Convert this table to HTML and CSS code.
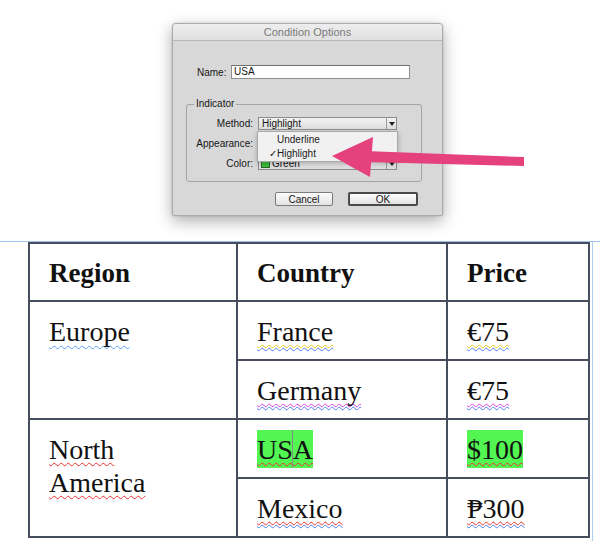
FILE: index.html
```html
<!DOCTYPE html>
<html>
<head>
<meta charset="utf-8">
<link rel="stylesheet" href="styles.css">
</head>
<body>
<div class="top">
  <div class="dialog">
    <div class="titlebar">Condition Options</div>
    <div class="name-row"><label class="name-lbl">Name:</label><div class="input">USA</div></div>
    <fieldset class="group">
      <legend>Indicator</legend>
      <div class="row">
        <span class="lbl">Method:</span>
        <div class="select">
          <span class="val">Highlight</span><span class="arr"></span>
          <div class="popup">
            <div class="item">Underline</div>
            <div class="item"><span class="check">✓</span>Highlight</div>
          </div>
        </div>
      </div>
      <div class="row">
        <span class="lbl">Appearance:</span>
        <div class="select"><span class="val"></span><span class="arr"></span></div>
      </div>
      <div class="row">
        <span class="lbl">Color:</span>
        <div class="select"><span class="swatch"></span><span class="val">Green</span><span class="arr"></span></div>
      </div>
    </fieldset>
    <div class="buttons"><button class="btn cancel">Cancel</button><button class="btn ok">OK</button></div>
  </div>
  <svg class="arrow" width="600" height="241" viewBox="0 0 600 241">
    <polygon points="365,151 524,157 524,166 365,162" fill="#e5417c"/>
    <polygon points="332,156 373,137 370,177" fill="#e5417c"/>
  </svg>
</div>
<div class="page">
  <div class="frame">
    <table class="grid">
      <colgroup><col class="c1"><col class="c2"><col class="c3"></colgroup>
      <tr class="head"><th>Region</th><th>Country</th><th>Price</th></tr>
      <tr>
        <td rowspan="2"><span class="sq-blue">Europe</span></td>
        <td><span class="sq-blue2"><span class="sq-yellow">France</span></span></td>
        <td><span class="sq-blue2"><span class="sq-yellow">€75</span></span></td>
      </tr>
      <tr>
        <td><span class="sq-blue2"><span class="sq-magenta">Germany</span></span></td>
        <td><span class="sq-blue2"><span class="sq-magenta">€75</span></span></td>
      </tr>
      <tr>
        <td rowspan="2"><span class="sq-red">North</span><br><span class="sq-red">America</span></td>
        <td><span class="hl sq-red">US<span class="caret">A</span></span></td>
        <td><span class="hl sq-red">$100</span></td>
      </tr>
      <tr>
        <td><span class="sq-blue2"><span class="sq-red">Mexico</span></span></td>
        <td><span class="sq-blue2"><span class="sq-red">₱300</span></span></td>
      </tr>
    </table>
  </div>
</div>
</body>
</html>
```
FILE: styles.css
```css
* { box-sizing: border-box; }
body { margin: 0; background: #fff; font-family: "Liberation Sans", Arial, sans-serif; }

.top { position: relative; height: 241px; padding-top: 23px; }
.dialog {
  margin-left: 172px; width: 271px; height: 193px;
  background: #d8d8d8; border: 1px solid #ababab; border-radius: 4px 4px 2px 2px;
  box-shadow: 0 5px 16px rgba(0,0,0,.33), 0 0 2px rgba(0,0,0,.2);
  font-size: 10px; color: #151515;
}
.titlebar {
  height: 17px; border-bottom: 1px solid #b6b6b6;
  background: linear-gradient(#eeeeee, #e0e0e0);
  border-radius: 3px 3px 0 0; text-align: center;
  font-size: 11px; line-height: 16px; color: #7a7a7a;
}
.name-row { display: flex; align-items: center; margin-top: 24px; padding-left: 24px; height: 14px; }
.name-lbl { width: 34px; }
.input {
  width: 179px; height: 14px; background: #fff;
  border: 1px solid #909090; border-top-color: #707070;
  padding-left: 2px; line-height: 12px;
}
.group {
  margin: 19px 0 0 13px; width: 236px; min-width: 0;
  padding: 7px 0 11px; border: 1px solid #a5a5a5; border-radius: 3px;
}
.group legend { margin-left: 7px; padding: 0 2px; line-height: 12px; font-size: 10px; }
.row { display: flex; align-items: center; height: 13px; margin-bottom: 7px; }
.row:last-child { margin-bottom: 0; }
.lbl { width: 66px; text-align: right; margin-right: 5px; }
.select {
  position: relative; width: 139px; height: 13px;
  border: 1px solid #8c8c8c;
  background: linear-gradient(#f3f3f3, #dddddd);
  display: flex; align-items: center;
}
.val { flex: 1; padding-left: 3px; line-height: 11px; }
.arr {
  width: 10px; height: 11px; border-left: 1px solid #9c9c9c;
  display: flex; align-items: center; justify-content: center;
}
.arr::after {
  content: ""; border-left: 3px solid transparent; border-right: 3px solid transparent;
  border-top: 4px solid #222;
}
.swatch { width: 9px; height: 8px; margin-left: 2px; background: #3cc43c; border: 1px solid #2a6a2a; }
.swatch + .val { padding-left: 2px; }

.popup {
  position: absolute; left: -2px; top: 13px; width: 141px; height: 31px;
  background: rgba(241,241,241,.98); border: 1px solid #a9a9a9;
  box-shadow: 0 2px 5px rgba(0,0,0,.25); padding-top: 1px; z-index: 2;
}
.item { position: relative; height: 14px; line-height: 14px; padding-left: 19px; color: #1a1a1a; }
.check { position: absolute; left: 11px; top: 0; font-size: 10px; font-weight: bold; font-family: "DejaVu Sans", sans-serif; }

.buttons { display: flex; justify-content: flex-end; gap: 15px; margin-top: 10px; padding-right: 24px; }
.btn {
  font: 10px "Liberation Sans", Arial, sans-serif; color: #151515;
  height: 14px; padding: 0; border: 1px solid #7c7c7c; border-radius: 2px;
  background: linear-gradient(#fdfdfd, #e3e3e3);
}
.cancel { width: 58px; }
.ok { width: 70px; border: 2px solid #4a4a4a; }

.arrow { position: absolute; left: 0; top: 0; pointer-events: none; z-index: 5; }

.page { border-top: 1px solid #a0c4f0; }
.frame { width: 593px; padding-left: 28px; padding-bottom: 3px; border-right: 1px solid #aecbf0; }
.grid {
  border-collapse: separate; border-spacing: 0; table-layout: fixed; width: 562px;
  border-left: 2px solid #464d5d; border-top: 2px solid #464d5d;
  font-family: "Liberation Serif", "DejaVu Serif", serif; color: #111;
}
.c1 { width: 208px; }
.c2 { width: 210px; }
.c3 { width: 142px; }
.grid td, .grid th {
  border-right: 2px solid #464d5d; border-bottom: 2px solid #464d5d;
  padding: 13px 8px 11px 19px; line-height: 33px; font-size: 28px;
  font-weight: normal; text-align: left; vertical-align: top;
}
.grid th { font-size: 27px; font-weight: bold; padding-bottom: 10px; }

.sq-blue, .sq-blue2, .sq-yellow, .sq-magenta, .sq-red {
  text-decoration-line: underline; text-decoration-style: wavy;
  text-decoration-thickness: 1px; text-decoration-skip-ink: none;
}
.sq-blue { text-decoration-color: #5ea2f2; text-underline-offset: 4px; }
.sq-blue2 { text-decoration-color: #4f7ef0; text-underline-offset: 6px; }
.sq-yellow { text-decoration-color: #e8d21e; text-underline-offset: 3px; }
.sq-magenta { text-decoration-color: #e040e0; text-underline-offset: 3px; }
.sq-red { text-decoration-color: #ee3030; text-underline-offset: 3px; }
.hl { background: #52f552; padding: 4px 0 3px; }
.caret { border-left: 1px solid #8a8a8a; margin-left: -1px; padding: 4px 0 3px; }
```
